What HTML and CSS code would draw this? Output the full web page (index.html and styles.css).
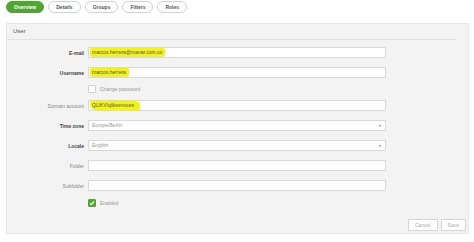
FILE: index.html
```html
<!DOCTYPE html>
<html lang="en">
<head>
    <meta charset="UTF-8">
    <title>User</title>
    <link rel="stylesheet" href="styles.css">
</head>
<body>
    <div class="tabs">
        <span class="tab active">Overview</span>
        <span class="tab">Details</span>
        <span class="tab">Groups</span>
        <span class="tab">Filters</span>
        <span class="tab">Roles</span>
    </div>

    <div class="panel">
        <div class="panel-head">User</div>
        <div class="panel-body">
            <div class="form">
                <label class="lbl strong">E-mail</label>
                <div class="field"><span class="mark">marcos.herrera@manar.com.co</span></div>

                <label class="lbl strong">Username</label>
                <div class="field"><span class="mark">marcos.herrera</span></div>

                <span></span>
                <div class="check-row"><span class="box"></span>Change password</div>

                <label class="lbl">Domain account</label>
                <div class="field"><span class="mark tail">QLIKV\qlikservices</span></div>

                <label class="lbl strong">Time zone</label>
                <div class="field select">Europe/Berlin<span class="caret"></span></div>

                <label class="lbl strong">Locale</label>
                <div class="field select">English<span class="caret"></span></div>

                <label class="lbl">Folder</label>
                <div class="field"></div>

                <label class="lbl">Subfolder</label>
                <div class="field"></div>

                <span></span>
                <div class="check-row last">
                    <span class="box on">
                        <svg width="6" height="6" viewBox="0 0 6 6"><path d="M1 3.2 L2.4 4.6 L5 1.5" fill="none" stroke="#fff" stroke-width="1.2"/></svg>
                    </span>Enabled
                </div>
            </div>
            <div class="actions">
                <span class="btn">Cancel</span>
                <span class="btn">Save</span>
            </div>
        </div>
    </div>
</body>
</html>
```
FILE: styles.css
```css
body {
    margin: 0;
    background: #fff;
    font-family: "Liberation Sans", Arial, sans-serif;
    color: #444;
}
.tabs {
    display: flex;
    gap: 4px;
    padding: 1px 0 0 6px;
}
.tab {
    height: 10px;
    line-height: 10px;
    padding: 0 7px;
    border: 1px solid #d2d2d2;
    border-radius: 7px;
    font-size: 5px;
    font-weight: bold;
    color: #555;
    background: #fff;
}
.tab.active {
    background: #52a433;
    border-color: #52a433;
    color: #fff;
}
.panel {
    margin: 10px 0 0 6px;
    width: 461px;
    background: #f3f3f3;
    border: 1px solid #e8e8e8;
}
.panel-head {
    height: 15px;
    line-height: 15px;
    padding-left: 6px;
    font-size: 6px;
    color: #555;
    border-bottom: 1px solid #e2e2e2;
    margin-right: 12px;
}
.panel-body {
    padding-top: 7px;
}
.form {
    display: grid;
    grid-template-columns: 77px 298px;
    column-gap: 4px;
    align-items: center;
}
.lbl {
    text-align: right;
    font-size: 5px;
    color: #888;
    margin-bottom: 9px;
}
.lbl.strong {
    font-weight: bold;
    color: #444;
}
.field {
    position: relative;
    box-sizing: border-box;
    height: 11px;
    line-height: 9px;
    margin-bottom: 9px;
    padding: 0 3px;
    background: #fff;
    border: 1px solid #d9d9d9;
    font-size: 5px;
    color: #999;
}
.mark {
    display: inline-block;
    height: 9px;
    padding: 0 3px 0 2px;
    margin-left: -2px;
    background: #f4f21c;
    border-radius: 2px;
    color: #555;
}
.mark.tail {
    border-bottom-left-radius: 5px;
    box-shadow: 3px 1px 0 #f4f21c;
}
.select .caret {
    position: absolute;
    right: 4px;
    top: 4px;
    border-left: 1.5px solid transparent;
    border-right: 1.5px solid transparent;
    border-top: 2px solid #777;
}
.check-row {
    display: flex;
    align-items: center;
    gap: 4px;
    height: 8px;
    margin: -2px 0 7px;
    font-size: 5px;
    color: #999;
}
.check-row.last {
    margin: -1px 0 0;
}
.box {
    box-sizing: border-box;
    width: 8px;
    height: 8px;
    border: 1px solid #cfcfcf;
    border-radius: 1px;
    background: #fff;
    display: flex;
    align-items: center;
    justify-content: center;
}
.box.on {
    background: #52a433;
    border-color: #52a433;
}
.actions {
    display: flex;
    justify-content: flex-end;
    gap: 3px;
    padding: 12px 2px 2px 0;
}
.btn {
    box-sizing: border-box;
    height: 12px;
    line-height: 10px;
    padding: 0 6px;
    border: 1px solid #d6d6d6;
    background: #fff;
    font-size: 5px;
    color: #aaa;
}
```
